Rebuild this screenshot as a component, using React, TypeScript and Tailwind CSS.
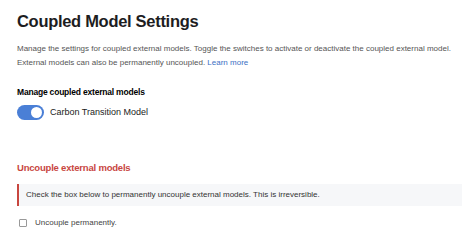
import React, { useState } from "react";

const App: React.FC = () => {
  const [enabled, setEnabled] = useState<boolean>(true);
  const [uncouple, setUncouple] = useState<boolean>(false);

  return (
    <div
      className="w-[474px] h-[248px] bg-white text-[#1d1d1f] px-[17px] pt-[10px] overflow-hidden"
      style={{ fontFamily: '"Liberation Sans", Arial, sans-serif' }}
    >
      <h1 className="text-[16.5px] font-bold leading-[22px] tracking-[-0.3px]">Coupled Model Settings</h1>

      <p className="mt-[10px] text-[8px] leading-[14px] text-[#555]">
        Manage the settings for coupled external models. Toggle the switches to activate or
        deactivate the coupled external model. External models can also be permanently uncoupled.{" "}
        <a className="text-[#3b6fc4]" href="#">
          Learn more
        </a>
      </p>

      {/* BEGIN: Manage */}
      <h2 className="mt-[16px] text-[8.5px] font-bold leading-[12px] tracking-[-0.2px] text-black">
        Manage coupled external models
      </h2>
      <div className="mt-[7px] flex items-center gap-[6px]">
        <button
          className={`w-[27px] h-[15px] rounded-full flex items-center px-[2px] ${
            enabled ? "bg-[#4a7fd6] justify-end" : "bg-[#cfd3da] justify-start"
          }`}
          onClick={() => setEnabled(!enabled)}
        >
          <span className="w-[11px] h-[11px] rounded-full bg-white" />
        </button>
        <span className="text-[9px] text-[#222]">Carbon Transition Model</span>
      </div>

      {/* BEGIN: Uncouple */}
      <h2 className="mt-[42px] text-[9.5px] font-bold leading-[12px] tracking-[-0.2px] text-[#c8463f]">
        Uncouple external models
      </h2>
      <div className="mt-[10px] w-[445px] h-[22px] bg-[#f6f7f9] border-l-[2px] border-[#c8463f] flex items-center pl-[7px]">
        <span className="text-[8px] text-[#333]">
          Check the box below to permanently uncouple external models. This is irreversible.
        </span>
      </div>
      <label className="mt-[11px] flex items-center gap-[8px] pl-[2px] cursor-pointer">
        <input
          type="checkbox"
          checked={uncouple}
          onChange={() => setUncouple(!uncouple)}
          className="appearance-none w-[8px] h-[8px] border border-[#999] rounded-[1px] bg-white checked:bg-[#4a7fd6]"
        />
        <span className="text-[8px] text-[#444]">Uncouple permanently.</span>
      </label>
    </div>
  );
};

export default App;
